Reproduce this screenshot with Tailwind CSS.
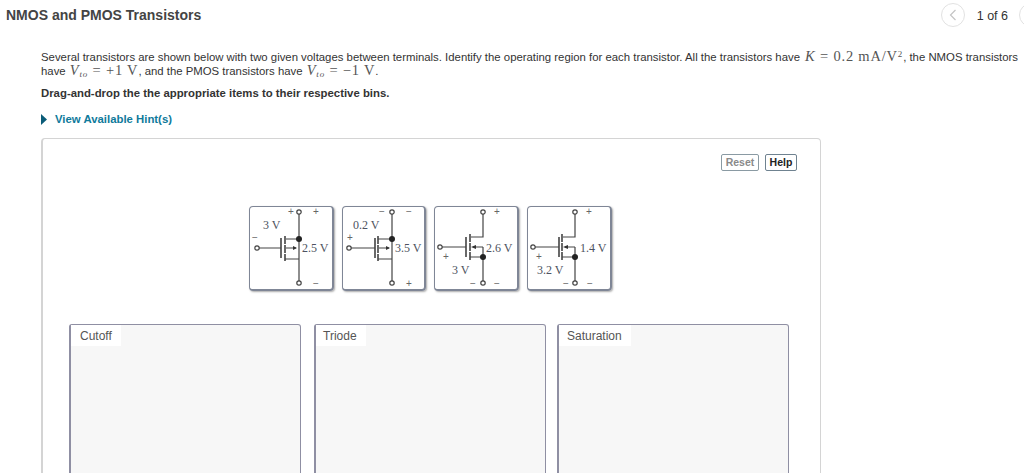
<!DOCTYPE html>
<html lang="en">
<head>
    <meta charset="UTF-8">
    <title>NMOS and PMOS Transistors</title>
    <script src="https://cdn.jsdelivr.net/npm/@tailwindcss/browser@4"></script>
</head>
<body class="h-[473px] overflow-hidden bg-white font-['Liberation_Sans',Arial,sans-serif] text-[#333]">

    <header class="flex h-[30px] items-center justify-between pl-[6px]">
        <h1 class="text-[14px] font-bold text-[#444]">NMOS and PMOS Transistors</h1>
        <div class="-mr-[19px] flex items-center">
            <button class="flex h-[24px] w-[24px] items-center justify-center rounded-full border border-[#e2e2e2]">
                <svg width="8" height="12" viewBox="0 0 8 12" fill="none" stroke="#c4c4c4" stroke-width="1.2"><path d="M6.5 1 L1.5 6 L6.5 11"/></svg>
            </button>
            <span class="ml-[12px] mr-[11px] mt-[2px] text-[12.5px] text-[#333]">1 of 6</span>
            <button class="h-[24px] w-[24px] rounded-full border border-[#e2e2e2]"></button>
        </div>
    </header>

    <main class="pl-[41px] pr-[6px] pt-[20px]">
        <p class="whitespace-nowrap text-[11.37px] leading-[14px]">
            Several transistors are shown below with two given voltages between terminals. Identify the operating region for each transistor. All the transistors have <span class="ml-[2px] font-['Liberation_Serif',serif] text-[14.5px] leading-[0] tracking-[0.8px] text-[#555]"><i>K</i> = 0.2 mA/V<sup class="text-[9px]">2</sup></span>, the NMOS transistors<br>
            have <span class="ml-[1px] font-['Liberation_Serif',serif] text-[14.5px] leading-[0] tracking-[0.8px] text-[#555]"><i>V</i><sub class="text-[9px]"><i>to</i></sub> = +1 V</span>, and the PMOS transistors have <span class="ml-[1px] font-['Liberation_Serif',serif] text-[14.5px] leading-[0] tracking-[0.8px] text-[#555]"><i>V</i><sub class="text-[9px]"><i>to</i></sub> = &minus;1 V</span>.
        </p>
        <p class="mt-[8px] text-[11.37px] font-bold leading-[14px]">Drag-and-drop the the appropriate items to their respective bins.</p>
        <div class="mt-[12px] flex items-center gap-[8px] text-[11.37px] font-bold leading-[14px] text-[#0f7a9b]">
            <svg width="6" height="11" viewBox="0 0 6 11"><path d="M0 0 L6 5.5 L0 11 Z" fill="#0b5c78"/></svg>
            View Available Hint(s)
        </div>

        <section class="mt-[12px] h-[400px] w-[780px] rounded-[4px] border border-[#d4d4d4] border-l-2 pl-[26px] pr-[23px] pt-[15px]">
            <div class="flex justify-end gap-[6px]">
                <button class="h-[17px] w-[38px] rounded-[2px] border border-[#8a9aa3] text-[10.5px] font-bold leading-none text-[#8a8a8a]">Reset</button>
                <button class="h-[17px] w-[32px] rounded-[2px] border border-[#6f8290] text-[10.5px] font-bold leading-none text-[#222]">Help</button>
            </div>

            <div class="ml-[180px] mt-[35px] flex gap-[8px]">
                <!-- NMOS, drain on top -->
                <div class="h-[85px] w-[85px] rounded-[4px] border-[1.5px] border-[#7f8696] border-b-[2px] border-r-[2px] shadow-[1px_1px_2px_#aaa]">
                    <svg width="81" height="81" viewBox="0 0 81 81" fill="none" stroke="#444" stroke-width="1.2" font-family="Liberation Serif">
                        <circle cx="49" cy="5" r="2.2"/><circle cx="7" cy="41" r="2.2"/><circle cx="49" cy="76" r="2.2"/>
                        <path d="M49 7V52M36 32H49M9 41H31M35 52H49V74M36 41H46"/>
                        <path d="M31 31V51M35 29V37M35 38V46M35 47V54" stroke-width="1.6"/>
                        <path d="M47 41L43 39V43Z" fill="#333" stroke="none"/>
                        <circle cx="49" cy="32" r="3" fill="#222" stroke="none"/>
                        <g fill="#4d5260" stroke="none" font-size="12">
                            <text x="13" y="22">3 V</text><text x="52" y="45">2.5 V</text>
                        </g>
                        <g fill="#666" stroke="none" font-family="Liberation Sans" font-size="10">
                            <text x="38" y="8">+</text><text x="63" y="8">+</text><text x="2" y="34">&minus;</text><text x="63" y="80">&minus;</text>
                        </g>
                    </svg>
                </div>
                <!-- PMOS style, low voltage -->
                <div class="h-[85px] w-[84px] rounded-[4px] border-[1.5px] border-[#7f8696] border-b-[2px] border-r-[2px] shadow-[1px_1px_2px_#aaa]">
                    <svg width="80" height="81" viewBox="0 0 80 81" fill="none" stroke="#444" stroke-width="1.2" font-family="Liberation Serif">
                        <circle cx="49" cy="5" r="2.2"/><circle cx="6" cy="41" r="2.2"/><circle cx="49" cy="76" r="2.2"/>
                        <path d="M49 7V52M35 32H49M8 41H32M35 52H49V74M36 41H46"/>
                        <path d="M32 31V51M35 29V37M35 38V46M35 47V54" stroke-width="1.6"/>
                        <path d="M47 41L43 39V43Z" fill="#333" stroke="none"/>
                        <circle cx="49" cy="32" r="3" fill="#222" stroke="none"/>
                        <g fill="#4d5260" stroke="none" font-size="12">
                            <text x="10" y="22">0.2 V</text><text x="52" y="45">3.5 V</text>
                        </g>
                        <g fill="#666" stroke="none" font-family="Liberation Sans" font-size="10">
                            <text x="36" y="8">&minus;</text><text x="63" y="8">&minus;</text><text x="4" y="34">+</text><text x="63" y="80">+</text>
                        </g>
                    </svg>
                </div>
                <!-- source body dot at the bottom -->
                <div class="h-[85px] w-[85px] rounded-[4px] border-[1.5px] border-[#7f8696] border-b-[2px] border-r-[2px] shadow-[1px_1px_2px_#aaa]">
                    <svg width="81" height="81" viewBox="0 0 81 81" fill="none" stroke="#444" stroke-width="1.2" font-family="Liberation Serif">
                        <circle cx="48" cy="5" r="2.2"/><circle cx="5" cy="40" r="2.2"/><circle cx="48" cy="76" r="2.2"/>
                        <path d="M48 7V30H36M7 40H31M35 50H48V74M48 40V50M38 40H48"/>
                        <path d="M31 30V50M35 27V35M35 36V44M35 45V53" stroke-width="1.6"/>
                        <path d="M36 40L41 38V42Z" fill="#333" stroke="none"/>
                        <circle cx="48" cy="50" r="3" fill="#222" stroke="none"/>
                        <g fill="#4d5260" stroke="none" font-size="12">
                            <text x="17" y="67">3 V</text><text x="51" y="45">2.6 V</text>
                        </g>
                        <g fill="#666" stroke="none" font-family="Liberation Sans" font-size="10">
                            <text x="59" y="8">+</text><text x="8" y="53">+</text><text x="35" y="80">&minus;</text><text x="59" y="80">&minus;</text>
                        </g>
                    </svg>
                </div>
                <div class="h-[85px] w-[85px] rounded-[4px] border-[1.5px] border-[#7f8696] border-b-[2px] border-r-[2px] shadow-[1px_1px_2px_#aaa]">
                    <svg width="81" height="81" viewBox="0 0 81 81" fill="none" stroke="#444" stroke-width="1.2" font-family="Liberation Serif">
                        <circle cx="47" cy="5" r="2.2"/><circle cx="5" cy="40" r="2.2"/><circle cx="47" cy="76" r="2.2"/>
                        <path d="M47 7V30H35M7 40H31M34 50H47V74M47 40V50M37 40H47"/>
                        <path d="M31 30V50M34 27V35M34 36V44M34 45V53" stroke-width="1.6"/>
                        <path d="M35 40L40 38V42Z" fill="#333" stroke="none"/>
                        <circle cx="47" cy="50" r="3" fill="#222" stroke="none"/>
                        <g fill="#4d5260" stroke="none" font-size="12">
                            <text x="9" y="67">3.2 V</text><text x="52" y="45">1.4 V</text>
                        </g>
                        <g fill="#666" stroke="none" font-family="Liberation Sans" font-size="10">
                            <text x="58" y="8">+</text><text x="8" y="53">+</text><text x="35" y="80">&minus;</text><text x="59" y="80">&minus;</text>
                        </g>
                    </svg>
                </div>
            </div>

            <div class="mt-[33px] flex">
                <div class="h-[200px] w-[232px] rounded-[3px] border border-[#8f8fa3] border-l-2 bg-[#f7f7f7]">
                    <span class="block w-fit bg-white pl-[9px] pr-[9px] pt-[1px] text-[12px] leading-[20px] text-[#555]">Cutoff</span>
                </div>
                <div class="ml-[13px] h-[200px] w-[232px] rounded-[3px] border border-[#8f8fa3] border-l-2 bg-[#f7f7f7]">
                    <span class="block w-fit bg-white pl-[7px] pr-[9px] pt-[1px] text-[12px] leading-[20px] text-[#555]">Triode</span>
                </div>
                <div class="ml-[11px] h-[200px] w-[232px] rounded-[3px] border border-[#8f8fa3] border-l-2 bg-[#f7f7f7]">
                    <span class="block w-fit bg-white pl-[8px] pr-[9px] pt-[1px] text-[12px] leading-[20px] text-[#555]">Saturation</span>
                </div>
            </div>
        </section>
    </main>
</body>
</html>
